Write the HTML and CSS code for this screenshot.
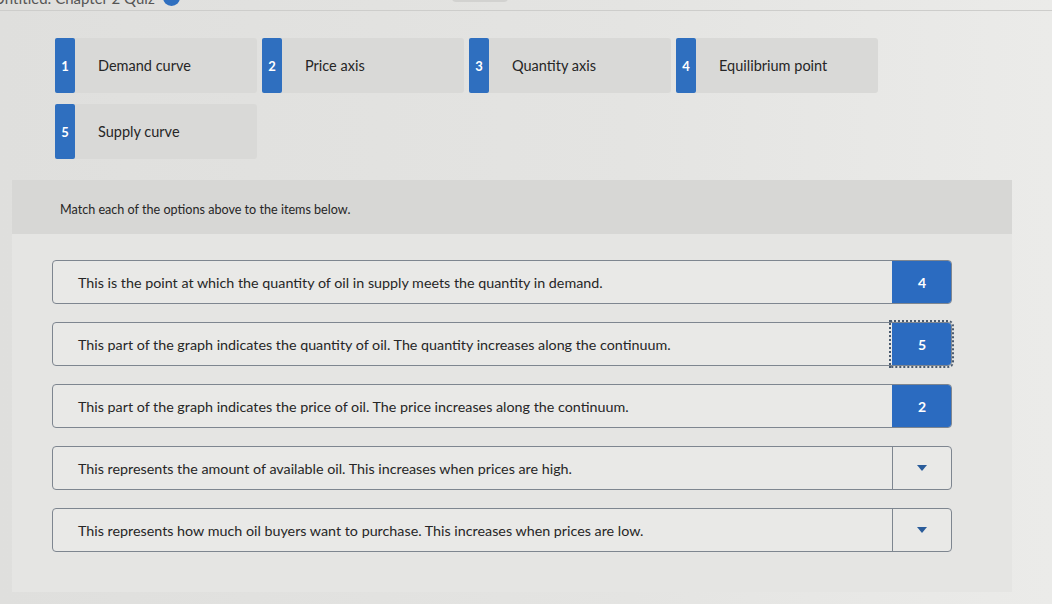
FILE: index.html
```html
<!DOCTYPE html>
<html>
<head>
<title>Chapter 2 Quiz</title>
<link rel="stylesheet" href="styles.css">
</head>
<body>

<div class="topbar">
  <span class="quiz-title">Untitled: Chapter 2 Quiz</span>
  <span class="info-dot">i</span>
  <span class="top-button"></span>
</div>

<!-- Options to drag -->
<div class="options">
  <div class="tile"><span class="badge">1</span><span class="tile-label">Demand curve</span></div>
  <div class="tile"><span class="badge">2</span><span class="tile-label">Price axis</span></div>
  <div class="tile"><span class="badge">3</span><span class="tile-label">Quantity axis</span></div>
  <div class="tile"><span class="badge">4</span><span class="tile-label">Equilibrium point</span></div>
  <div class="tile"><span class="badge">5</span><span class="tile-label">Supply curve</span></div>
</div>

<div class="panel">
  <div class="panel-head">Match each of the options above to the items below.</div>
  <div class="panel-body">
    <div class="match-row">
      <p>This is the point at which the quantity of oil in supply meets the quantity in demand.</p>
      <div class="answer filled">4</div>
    </div>
    <div class="match-row">
      <p>This part of the graph indicates the quantity of oil. The quantity increases along the continuum.</p>
      <div class="answer filled focused">5</div>
    </div>
    <div class="match-row">
      <p>This part of the graph indicates the price of oil. The price increases along the continuum.</p>
      <div class="answer filled">2</div>
    </div>
    <div class="match-row">
      <p>This represents the amount of available oil. This increases when prices are high.</p>
      <div class="answer"><span class="caret"></span></div>
    </div>
    <div class="match-row">
      <p>This represents how much oil buyers want to purchase. This increases when prices are low.</p>
      <div class="answer"><span class="caret"></span></div>
    </div>
  </div>
</div>

</body>
</html>
```

FILE: styles.css
```css
body {
  margin: 0;
  background: linear-gradient(90deg, #dfdfdd 0%, #e4e4e2 60%, #ebebe9 100%);
  font-family: Lato, "Liberation Sans", sans-serif;
  color: #262626;
}

/* Cut-off header strip */
.topbar {
  height: 10px;
  display: flex;
  align-items: flex-end;
  overflow: hidden;
  border-bottom: 1px solid #cdcdcb;
}

.quiz-title {
  font-size: 15px;
  line-height: 15px;
  margin-left: -6px;
  margin-bottom: 4px;
  color: #555;
}

.info-dot {
  width: 17px;
  height: 17px;
  border-radius: 50%;
  background: #2f6fbf;
  color: white;
  font-size: 11px;
  text-align: center;
  margin-left: 8px;
  margin-bottom: 4px;
}

.top-button {
  width: 56px;
  height: 14px;
  border-radius: 4px;
  background: #d2d2d0;
  margin-left: 272px;
  margin-bottom: 8px;
}

/* Option tiles */
.options {
  display: grid;
  grid-template-columns: repeat(4, 202px);
  column-gap: 5px;
  row-gap: 11px;
  padding: 27px 0 0 55px;
}

.tile {
  display: flex;
  height: 55px;
}

.badge {
  width: 20px;
  background: #2f6fbf;
  color: white;
  font-weight: bold;
  font-size: 13px;
  display: flex;
  align-items: center;
  justify-content: center;
  border-radius: 2px;
}

.tile-label {
  flex: 1;
  background: #d9d9d7;
  display: flex;
  align-items: center;
  padding-left: 23px;
  font-size: 14.5px;
  border-radius: 0 3px 3px 0;
}

/* Matching panel */
.panel {
  margin: 21px 40px 0 12px;
  background: #e5e5e3;
}

.panel-head {
  background: #d7d7d5;
  height: 54px;
  display: flex;
  align-items: center;
  padding-left: 48px;
  font-size: 12.6px;
  padding-top: 4px;
  box-sizing: border-box;
}

.panel-body {
  display: flex;
  flex-direction: column;
  gap: 18px;
  padding: 26px 0 40px 40px;
}

.match-row {
  width: 900px;
  height: 44px;
  box-sizing: border-box;
  display: flex;
  align-items: center;
  border: 1px solid #7e8690;
  border-radius: 4px;
  background: #e9e9e7;
}

.match-row p {
  flex: 1;
  margin: 0;
  padding-left: 25px;
  font-size: 14.3px;
}

.answer {
  width: 58px;
  align-self: stretch;
  border-left: 1px solid #7e8690;
  display: flex;
  align-items: center;
  justify-content: center;
  border-radius: 0 3px 3px 0;
}

.answer.filled {
  background: #2b6bc0;
  color: white;
  font-weight: bold;
  font-size: 14px;
  border-left-color: #2b6bc0;
}

.answer.focused {
  outline: 2px dotted #4a5a6e;
  outline-offset: 1px;
}

.caret {
  width: 0;
  height: 0;
  border-left: 5px solid transparent;
  border-right: 5px solid transparent;
  border-top: 6px solid #2a5c9a;
}
```
